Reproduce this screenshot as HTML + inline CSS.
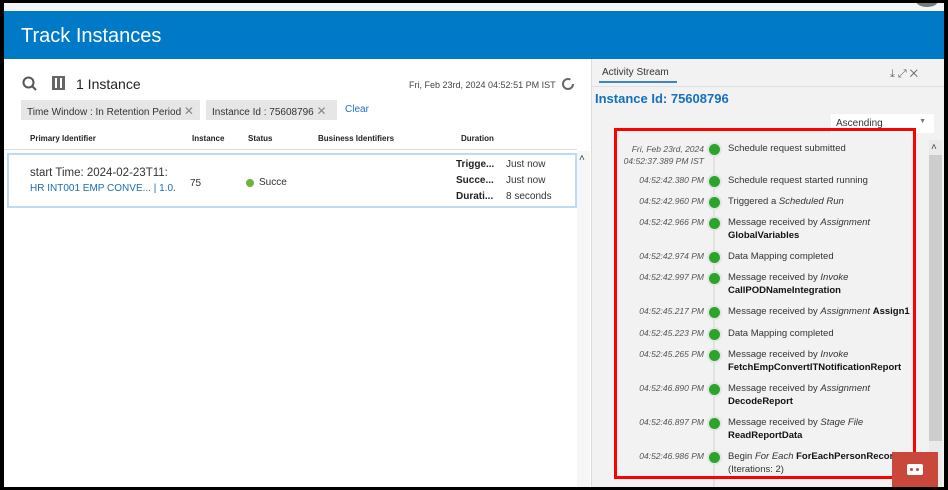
<!DOCTYPE html>
<html><head><meta charset="utf-8"><style>
*{box-sizing:border-box;margin:0;padding:0}
body{width:948px;height:490px;overflow:hidden;background:#000;font-family:"Liberation Sans",sans-serif;position:relative}
.a{position:absolute;white-space:nowrap}
#scr{position:absolute;left:4px;top:3px;width:940px;height:484px;background:#fff;overflow:hidden}
.hd{font-weight:bold;font-size:8px;color:#222}
.t{font-style:italic;font-size:8.5px;color:#555;text-align:right;width:90px;left:610px}
.dot{position:absolute;left:705px;width:11px;height:11px;border-radius:50%;background:#2aa52a;box-shadow:0 0 0 2px #e4e4e4}
.m{font-size:9.5px;color:#333;left:724px;line-height:13px}
.m b{color:#111}
</style></head><body>
<div id="scr">
<div class="a" style="left:0;top:0;width:940px;height:8px;background:#f4f4f4"></div>
<div class="a" style="left:912px;top:-8px;width:22px;height:12px;border-radius:50%;background:#777"></div>
<div class="a" style="left:0;top:8px;width:940px;height:48px;background:#0079c6"></div>
<div class="a" style="left:17px;top:22px;font-size:20px;color:#fff">Track Instances</div>
<svg class="a" style="left:18px;top:73px" width="16" height="16"><circle cx="6.5" cy="6.5" r="5" fill="none" stroke="#555" stroke-width="2"/><line x1="10" y1="10" x2="14" y2="14" stroke="#555" stroke-width="2"/></svg>
<div class="a" style="left:48px;top:73px;width:13px;height:14px;background:#666"><div style="position:absolute;left:3px;top:2px;width:2px;height:10px;background:#fff"></div><div style="position:absolute;left:8px;top:2px;width:2px;height:10px;background:#fff"></div></div>
<div class="a" style="left:72px;top:73px;font-size:14px;color:#222">1 Instance</div>
<div class="a" style="left:405px;top:77px;font-size:9px;color:#444">Fri, Feb 23rd, 2024 04:52:51 PM IST</div>
<svg class="a" style="left:557px;top:74px" width="14" height="14"><circle cx="7" cy="7" r="5" fill="none" stroke="#666" stroke-width="2" stroke-dasharray="26 6"/></svg>
<div class="a" style="left:17px;top:97px;width:179px;height:20px;background:#e6e6e6;font-size:10px;color:#333;padding:4px 0 0 6px">Time Window : In Retention Period <span style="color:#888;font-size:12px">&#x2715;</span></div>
<div class="a" style="left:202px;top:97px;width:131px;height:20px;background:#e6e6e6;font-size:10px;color:#333;padding:4px 0 0 6px">Instance Id : 75608796 <span style="color:#888;font-size:12px">&#x2715;</span></div>
<div class="a" style="left:341px;top:101px;font-size:10px;color:#1a73c2">Clear</div>
<div class="a hd" style="left:26px;top:131px">Primary Identifier</div>
<div class="a hd" style="left:188px;top:131px">Instance</div>
<div class="a hd" style="left:244px;top:131px">Status</div>
<div class="a hd" style="left:314px;top:131px">Business Identifiers</div>
<div class="a hd" style="left:457px;top:131px">Duration</div>
<div class="a" style="left:0;top:146px;width:573px;height:1px;background:#ddd"></div>
<div class="a" style="left:3px;top:150px;width:570px;height:55px;border:2px solid #bcdcf5;background:#fff"></div>
<div class="a" style="left:26px;top:164px;font-size:11.5px;color:#333">start Time: 2024-02-23T11:</div>
<div class="a" style="left:26px;top:180px;font-size:10px;color:#1a6fb5">HR INT001 EMP CONVE... | 1.0.</div>
<div class="a" style="left:186px;top:175px;font-size:10px;color:#333">75</div>
<div class="a" style="left:242px;top:176px;width:8px;height:8px;border-radius:50%;background:#6cb33f"></div>
<div class="a" style="left:255px;top:174px;font-size:10px;color:#333;width:28px;overflow:hidden">Succeeded</div>
<div class="a" style="left:452px;top:154px;font-size:10px;line-height:16px;color:#222;font-weight:bold">Trigge...<br>Succe...<br>Durati...</div>
<div class="a" style="left:502px;top:154px;font-size:10px;line-height:16px;color:#333">Just now<br>Just now<br>8 seconds</div>
<div class="a" style="left:573px;top:148px;width:13px;height:336px;background:#f6f6f6"></div>
<div class="a" style="left:575px;top:150px;font-size:10px;color:#444">&#x2c4;</div>
<div class="a" style="left:587px;top:56px;width:353px;height:428px;background:#f2f2f2;border-left:1px solid #ddd"></div>
<div class="a" style="left:598px;top:64px;font-size:10px;color:#333">Activity Stream</div>
<div class="a" style="left:595px;top:78px;width:78px;height:2px;background:#3d86c6"></div>
<div class="a" style="left:587px;top:83px;width:353px;height:1px;background:#e0e0e0"></div>
<div class="a" style="left:886px;top:65px;font-size:11px;color:#666;letter-spacing:3px">&#x2913;&#x2922;&#x2715;</div>
<div class="a" style="left:591px;top:88px;font-size:13px;font-weight:bold;color:#1570c0">Instance Id: 75608796</div>
<div class="a" style="left:827px;top:111px;width:103px;height:19px;background:#fff;font-size:10px;color:#333;padding:4px 0 0 5px">Ascending<span style="position:absolute;right:8px;top:4px;font-size:7px;color:#777">&#x25BC;</span></div>
<div class="a" style="left:925px;top:137px;width:13px;height:347px;background:#eaeaea"></div>
<div class="a" style="left:927px;top:139px;font-size:10px;color:#444">&#x2c4;</div>
<div class="a" style="left:925px;top:152px;width:13px;height:286px;background:#cdcdcd"></div>
<div class="a" style="left:709px;top:145px;width:2px;height:339px;background:#e2e2e2"></div>
<div class="a t" style="top:140px;line-height:12px">Fri, Feb 23rd, 2024<br>04:52:37.389 PM IST</div>
<div class="dot" style="top:141px"></div><div class="a m" style="top:139px">Schedule request submitted</div>
<div class="a t" style="top:172px">04:52:42.380 PM</div><div class="dot" style="top:173px"></div><div class="a m" style="top:171px">Schedule request started running</div>
<div class="a t" style="top:193px">04:52:42.960 PM</div><div class="dot" style="top:194px"></div><div class="a m" style="top:192px">Triggered a <i>Scheduled Run</i></div>
<div class="a t" style="top:214px">04:52:42.966 PM</div><div class="dot" style="top:215px"></div><div class="a m" style="top:213px">Message received by <i>Assignment</i><br><b>GlobalVariables</b></div>
<div class="a t" style="top:248px">04:52:42.974 PM</div><div class="dot" style="top:249px"></div><div class="a m" style="top:247px">Data Mapping completed</div>
<div class="a t" style="top:269px">04:52:42.997 PM</div><div class="dot" style="top:270px"></div><div class="a m" style="top:268px">Message received by <i>Invoke</i><br><b>CallPODNameIntegration</b></div>
<div class="a t" style="top:303px">04:52:45.217 PM</div><div class="dot" style="top:304px"></div><div class="a m" style="top:302px">Message received by <i>Assignment</i> <b>Assign1</b></div>
<div class="a t" style="top:325px">04:52:45.223 PM</div><div class="dot" style="top:326px"></div><div class="a m" style="top:324px">Data Mapping completed</div>
<div class="a t" style="top:346px">04:52:45.265 PM</div><div class="dot" style="top:347px"></div><div class="a m" style="top:345px">Message received by <i>Invoke</i><br><b>FetchEmpConvertITNotificationReport</b></div>
<div class="a t" style="top:380px">04:52:46.890 PM</div><div class="dot" style="top:381px"></div><div class="a m" style="top:379px">Message received by <i>Assignment</i><br><b>DecodeReport</b></div>
<div class="a t" style="top:414px">04:52:46.897 PM</div><div class="dot" style="top:415px"></div><div class="a m" style="top:413px">Message received by <i>Stage File</i><br><b>ReadReportData</b></div>
<div class="a t" style="top:448px">04:52:46.986 PM</div><div class="dot" style="top:449px"></div><div class="a m" style="top:447px">Begin <i>For Each</i> <b>ForEachPersonRecord</b><br>(Iterations: 2)</div>
<div class="a" style="left:610px;top:125px;width:302px;height:351px;border:3px solid #f00"></div>
<div class="a" style="left:888px;top:449px;width:46px;height:35px;background:#c9483b"></div>
<div class="a" style="left:903px;top:461px;width:16px;height:11px;background:#fff;border-radius:2px"><span style="position:absolute;left:3px;top:4px;width:3px;height:3px;background:#c9483b;border-radius:50%"></span><span style="position:absolute;left:9px;top:4px;width:3px;height:3px;background:#c9483b;border-radius:50%"></span></div>
</div>
</body></html>
